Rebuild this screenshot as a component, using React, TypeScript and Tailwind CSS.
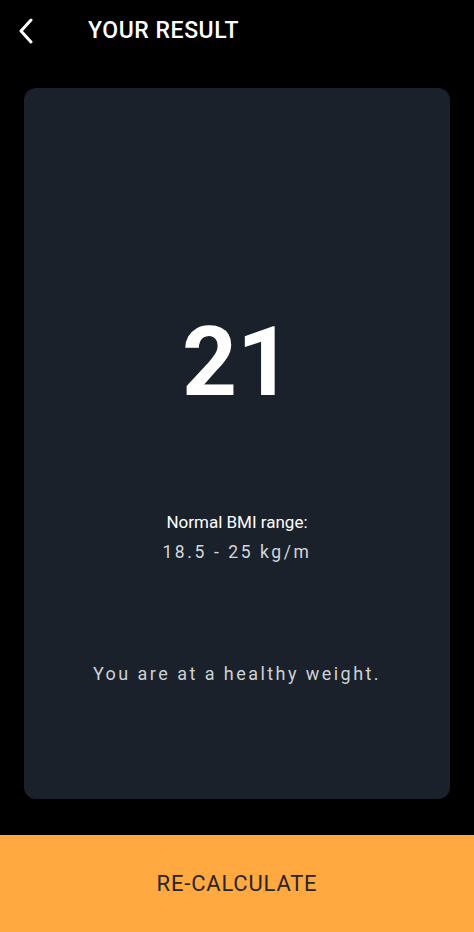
import React from "react";

const font = { fontFamily: "Roboto, 'Noto Sans', sans-serif" };

export default function App() {
  return (
    <div
      className="flex h-[932px] w-full flex-col bg-black text-white"
      style={font}
    >
      {/* Header */}
      <div className="flex h-[62px] items-center">
        <button className="ml-[18px] flex h-8 w-8 items-center justify-start">
          <svg
            width="18"
            height="26"
            viewBox="0 0 18 26"
            fill="none"
            stroke="white"
            strokeWidth="3"
            strokeLinecap="round"
            strokeLinejoin="round"
          >
            <path d="M13 2 L3 13 L13 24" />
          </svg>
        </button>
        <h1 className="ml-[38px] text-[23px] font-medium tracking-[0.55px]">
          YOUR RESULT
        </h1>
      </div>

      {/* Result card */}
      <div className="mx-6 mt-[26px] mb-9 flex flex-1 flex-col items-center rounded-xl bg-[#1a212b]">
        <div className="mt-[226px] text-[96px] font-bold leading-none">21</div>
        <p className="mt-[100px] text-[17px] leading-6 text-white">
          Normal BMI range:
        </p>
        <p className="mt-[6px] text-[17.5px] leading-6 tracking-[2.6px] text-[#d3d6db]">
          18.5 - 25 kg/m
        </p>
        <p className="mt-[96px] text-[18px] leading-7 tracking-[2.45px] text-[#cdd1d6]">
          You are at a healthy weight.
        </p>
      </div>

      {/* Button */}
      <button className="flex h-[97px] w-full items-center justify-center bg-[#ffa940] text-[22px] tracking-[0.8px] text-[#2a2520]">
        RE-CALCULATE
      </button>
    </div>
  );
}
